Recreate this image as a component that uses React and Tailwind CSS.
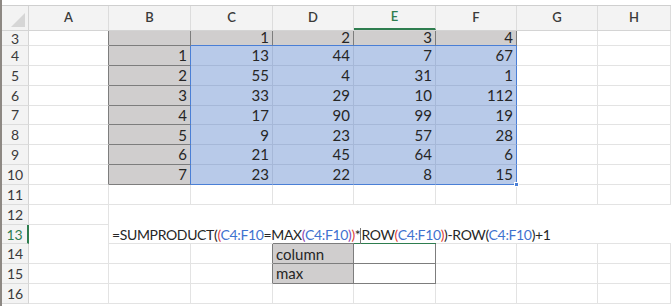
import React from "react";

const FONT = { fontFamily: "Lato, 'Open Sans', sans-serif" };

// largeurs des colonnes A..H
const COLS = [
  { k: "A", w: "w-[80px]" },
  { k: "B", w: "w-[82px]" },
  { k: "C", w: "w-[82px]" },
  { k: "D", w: "w-[81px]" },
  { k: "E", w: "w-[82px]" },
  { k: "F", w: "w-[81px]" },
  { k: "G", w: "w-[81px]" },
  { k: "H", w: "flex-1" },
];

const DATA = [
  [1, 13, 44, 7, 67],
  [2, 55, 4, 31, 1],
  [3, 33, 29, 10, 112],
  [4, 17, 90, 99, 19],
  [5, 9, 23, 57, 28],
  [6, 21, 45, 64, 6],
  [7, 23, 22, 8, 15],
];

const GRID = "border-r border-b border-[#e3e3e3]";

const RowHead = ({ n, active, h = "h-[19.85px]" }) => (
  <div
    className={`w-[27px] shrink-0 ${h} flex items-center justify-center bg-[#f3f3f3] border-b border-[#dcdcdc] text-[14px] ${
      active
        ? "text-[#2e7d4f] border-r-2 border-r-[#2e7d4f]"
        : "text-[#3a3a3a] border-r border-r-[#d4d4d4]"
    }`}
  >
    {n}
  </div>
);

const Cell = ({ w, className = "", children, right }) => (
  <div
    className={`${w} shrink-0 h-full flex items-center px-[3px] text-[15px] text-[#262626] ${
      right ? "justify-end" : ""
    } ${className}`}
  >
    {children}
  </div>
);

const Row = ({ n, active, h = "h-[19.85px]", children }) => (
  <div className={`flex ${h}`}>
    <RowHead n={n} active={active} h={h} />
    {children}
  </div>
);

const PlainCells = ({ from = 0, to = 8 }) =>
  COLS.slice(from, to).map((c) => (
    <Cell key={c.k} w={c.w} className={GRID} />
  ));

const B = ({ c }) => <span className="text-[#3f72cf]">{c}</span>;
const R = ({ c }) => <span className="text-[#e0413a]">{c}</span>;
const P = ({ c }) => <span className="text-[#8d45b5]">{c}</span>;

export default function App() {
  return (
    <div
      className="w-[671px] h-[306px] overflow-hidden bg-white border-l-2 border-[#8d8883]"
      style={FONT}
    >
      {/* reste de la barre de formule */}
      <div className="h-[6px] border-b border-[#cfcfcf]" />

      {/* en-tête des colonnes */}
      <div className="flex h-[25px] bg-[#f3f3f3] border-b border-[#d4d4d4]">
        <div className="w-[27px] shrink-0 relative border-r border-[#d4d4d4]">
          <div className="absolute right-[3px] bottom-[3px] w-0 h-0 border-l-[14px] border-l-transparent border-b-[14px] border-b-[#d6d6d6]" />
        </div>
        {COLS.map((c) => (
          <div
            key={c.k}
            className={`${c.w} shrink-0 flex items-center justify-center text-[13px] font-semibold border-r border-[#dcdcdc] ${
              c.k === "E"
                ? "text-[#2e7d4f] border-b-2 border-b-[#2e7d4f]"
                : "text-[#3a3a3a]"
            }`}
          >
            {c.k}
          </div>
        ))}
      </div>

      {/* ligne 3, à moitié cachée */}
      <Row n={3} h="h-[15px]">
        <Cell w={COLS[0].w} className="border-r border-r-[#7d7d7d] border-b border-b-[#e3e3e3]" />
        <Cell w={COLS[1].w} className="bg-[#d0cece] border-r border-b border-[#7d7d7d]" />
        {[1, 2, 3, 4].map((v, i) => (
          <Cell
            key={v}
            w={COLS[2 + i].w}
            right
            className="bg-[#d0cece] border-r border-r-[#7d7d7d] border-b border-b-[#4a7fd6] leading-none items-end"
          >
            {v}
          </Cell>
        ))}
        <PlainCells from={6} />
      </Row>

      {/* lignes 4 à 10 */}
      {DATA.map((r, ri) => {
        const last = ri === DATA.length - 1;
        return (
          <Row key={ri} n={ri + 4}>
            <Cell w={COLS[0].w} className="border-r border-r-[#7d7d7d] border-b border-b-[#e3e3e3]" />
            <Cell
              w={COLS[1].w}
              right
              className="bg-[#d0cece] border-r border-r-[#4a7fd6] border-b border-b-[#7d7d7d]"
            >
              {r[0]}
            </Cell>
            {r.slice(1).map((v, i) => (
              <Cell
                key={i}
                w={COLS[2 + i].w}
                right
                className={`bg-[#b8cae9] text-[#25324a] relative border-r border-b ${
                  i === 3 ? "border-r-[#4a7fd6]" : "border-r-[#a6b8d8]"
                } ${last ? "border-b-[#4a7fd6]" : "border-b-[#a6b8d8]"}`}
              >
                {v}
                {last && i === 3 && (
                  <span className="absolute -right-[3px] -bottom-[3px] w-[5px] h-[5px] bg-[#4a7fd6] border border-white" />
                )}
              </Cell>
            ))}
            <PlainCells from={6} />
          </Row>
        );
      })}

      <Row n={11}>
        <PlainCells />
      </Row>

      {/* zone d'édition de la formule */}
      <Row n={12}>
        <Cell w={COLS[0].w} className={GRID} />
        <div className="flex-1 h-full" />
      </Row>
      <Row n={13} active>
        <Cell w={COLS[0].w} className="border-r border-[#e3e3e3]" />
        <Cell w={COLS[1].w} className="border-b border-[#e3e3e3] px-0 relative z-10">
          <span className="whitespace-nowrap text-[#262626] text-[14px] tracking-[-0.35px]">
            =SUMPRODUCT(<R c="(" />
            <B c="C4:F10" />=MAX<P c="(" />
            <B c="C4:F10" />
            <P c=")" />
            <R c=")" />*
            <span className="inline-block w-px h-[16px] bg-[#777] align-middle" />
            ROW<R c="(" />
            <B c="C4:F10" />
            <R c=")" />
            )-ROW(<B c="C4:F10" />
            )+1
          </span>
        </Cell>
        <Cell w={COLS[2].w} className="border-b border-[#e3e3e3]" />
        <Cell w={COLS[3].w} className="border-b border-[#7d7d7d]" />
        <Cell w={COLS[4].w} className="border-b border-[#2e7d4f]" />
        <Cell w={COLS[5].w} className="border-b border-[#e3e3e3]" />
        <Cell w={COLS[6].w} className="border-b border-[#e3e3e3]" />
        <Cell w={COLS[7].w} className="border-b border-[#e3e3e3]" />
      </Row>

      {/* petit tableau column / max */}
      {["column", "max"].map((t, i) => (
        <Row key={t} n={14 + i}>
          <PlainCells from={0} to={2} />
          <Cell w={COLS[2].w} className="border-r border-r-[#7d7d7d] border-b border-b-[#e3e3e3]" />
          <Cell w={COLS[3].w} className="bg-[#d0cece] border-r border-b border-[#7d7d7d]">
            {t}
          </Cell>
          <Cell w={COLS[4].w} className="border-r border-b border-[#7d7d7d]" />
          <PlainCells from={5} />
        </Row>
      ))}

      <Row n={16}>
        <PlainCells />
      </Row>
    </div>
  );
}
